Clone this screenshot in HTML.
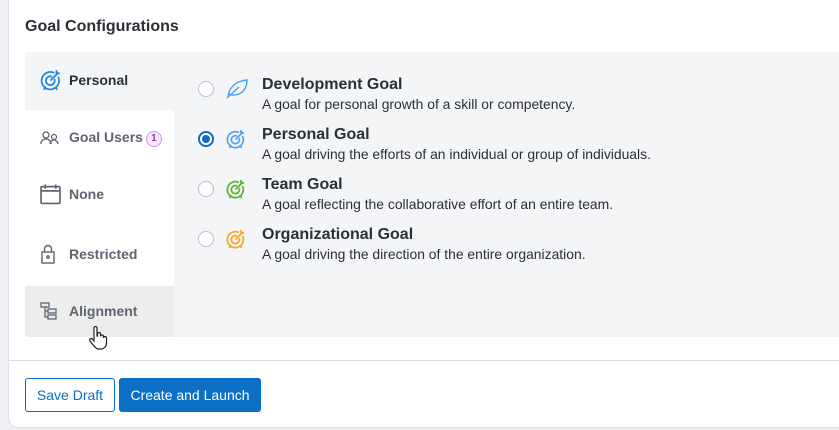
<!DOCTYPE html>
<html><head><style>
*{box-sizing:border-box;margin:0;padding:0}
body{width:839px;height:430px;background:#eef0f4;font-family:"Liberation Sans",Arial,sans-serif;position:relative;overflow:hidden}
.card{position:absolute;left:8px;top:-10px;width:850px;height:438px;background:#fff;border:1px solid #dde1e7;border-radius:10px}
.h{position:absolute;left:25px;top:18px;font-size:16px;font-weight:bold;color:#2b2f36}
.panel{position:absolute;left:25px;top:52px;width:814px;height:285px;background:#f4f5f7}
.nav{position:absolute;left:25px;top:110px;width:149px;height:227px;background:#fff}
.tab{position:absolute;left:25px;width:149px;height:52px;font-size:14px;font-weight:bold;color:#5f6570}
.tab span{position:absolute;left:44px;top:50%;transform:translateY(-50%)}
.tab svg{position:absolute;left:15px;top:50%;transform:translateY(-50%)}
.badge{display:inline-block;width:16px;height:16px;border:1px solid #d58ff0;border-radius:50%;background:#f8eafd;color:#9b2fc7;font-size:10px;text-align:center;line-height:14px;margin-left:3px;vertical-align:1px}
.opt{position:absolute;left:198px}
.radio{position:absolute;left:0;top:5px;width:16px;height:16px;border:1px solid #b9c2cf;border-radius:50%;background:#fff}
.radio.on{border:2px solid #0b6cc4}
.radio.on::after{content:"";position:absolute;left:2px;top:2px;width:8px;height:8px;border-radius:50%;background:#0b6cc4}
.opt svg{position:absolute;left:27px;top:2px}
.t{position:absolute;left:64px;top:0;font-size:16px;font-weight:bold;color:#2b2f36;white-space:nowrap}
.d{position:absolute;left:64px;top:20px;font-size:13.9px;color:#2b2f36;white-space:nowrap}
.hr{position:absolute;left:9px;top:360px;width:830px;height:1px;background:#d9dde3}
.b1{position:absolute;left:25px;top:378px;width:90px;height:34px;border:1px solid #0b6cc4;border-radius:3px;color:#0b6cc4;font-size:14px;text-align:center;line-height:32px;background:#fff}
.b2{position:absolute;left:119px;top:378px;width:142px;height:34px;border-radius:3px;background:#0a6fc5;color:#fff;font-size:14px;text-align:center;line-height:34px}
</style></head><body>
<div class="card"></div>
<div class="h">Goal Configurations</div>
<div class="panel"></div>
<div class="nav"></div>
<div style="position:absolute;left:25px;top:286px;width:149px;height:51px;background:#ededee;border-radius:0 0 0 3px"></div>

<div class="tab" style="top:54px;color:#2b2f36"><svg width="22" height="24" viewBox="0 0 20 22" fill="none" stroke="#1f87e0" stroke-width="1.6"><path d="M13 4.5A8 8 0 1 0 16.5 8"/><path d="M11 8A4 4 0 1 0 13 10"/><path d="M9.5 11.5L17 4M15 2v3h3"/><path d="M5 17l-1.5 3M14 17l1.5 3"/></svg><span>Personal</span></div>
<div class="tab" style="top:112px"><svg width="20" height="16" viewBox="0 0 20 16" fill="none" stroke="#5f6570" stroke-width="1.3"><circle cx="6" cy="5" r="3"/><circle cx="14" cy="7" r="2.5"/><path d="M1 14c0-3 2-5 5-5s5 2 5 5M10 14c0-2 2-4 4-4s4 2 4 4"/></svg><span>Goal Users<i class="badge" style="font-style:normal">1</i></span></div>
<div class="tab" style="top:168px"><svg width="21" height="21" viewBox="0 0 20 20" fill="none" stroke="#5f6570" stroke-width="1.6"><rect x="1" y="3" width="18" height="16" rx="1"/><path d="M1 7h18M5 1v4M15 1v4" /></svg><span>None</span></div>
<div class="tab" style="top:228px"><svg width="16" height="21" viewBox="0 0 16 20" fill="none" stroke="#5f6570" stroke-width="1.4"><rect x="2" y="8" width="12" height="11"/><path d="M4.5 8V5a3.5 3.5 0 0 1 7 0v3"/><circle cx="8" cy="13" r="1.2"/></svg><span>Restricted</span></div>
<div class="tab" style="top:285px"><svg width="20" height="20" viewBox="0 0 20 20" fill="none" stroke="#5f6570" stroke-width="1.3"><rect x="1" y="2" width="8" height="4"/><rect x="8" y="8" width="8" height="4"/><rect x="8" y="14" width="8" height="4"/><path d="M5 6v10h3M5 10h3"/></svg><span>Alignment</span></div>
<svg style="position:absolute;left:88px;top:326px" width="20" height="24" viewBox="0 0 20 24"><path d="M6 2a1.5 1.5 0 0 1 3 0v8h.5V8a1.5 1.5 0 0 1 3 0v2.5a1.5 1.5 0 0 1 3 0V12a1.5 1.5 0 0 1 3 0v5c0 3-2 6-6 6h-2c-2 0-3-1-4.5-3L2 15a1.5 1.5 0 0 1 2.5-2L6 15z" fill="#fff" stroke="#222" stroke-width="1.2"/></svg>

<div class="opt" style="top:76px"><div class="radio"></div><svg width="24" height="22" viewBox="0 0 24 22" fill="none" stroke="#4aa3f0" stroke-width="1.4"><path d="M3 19C4 9 11 3 22 2c0 10-6 15-14 15-2 0-4-1-5-2"/><path d="M2 20L14 9"/></svg><div class="t">Development Goal</div><div class="d">A goal for personal growth of a skill or competency.</div></div>
<div class="opt" style="top:126px"><div class="radio on"></div><svg width="22" height="22" viewBox="0 0 20 22" fill="none" stroke="#4aa3f0" stroke-width="1.6"><path d="M13 4.5A8 8 0 1 0 16.5 8"/><path d="M11 8A4 4 0 1 0 13 10"/><path d="M9.5 11.5L17 4M15 2v3h3"/><path d="M5 17l-1.5 3M14 17l1.5 3"/></svg><div class="t">Personal Goal</div><div class="d">A goal driving the efforts of an individual or group of individuals.</div></div>
<div class="opt" style="top:176px"><div class="radio"></div><svg width="22" height="22" viewBox="0 0 20 22" fill="none" stroke="#5ab52a" stroke-width="1.7"><path d="M13 4.5A8 8 0 1 0 16.5 8"/><path d="M11 8A4 4 0 1 0 13 10"/><path d="M9.5 11.5L17 4M15 2v3h3"/><path d="M5 17l-1.5 3M14 17l1.5 3"/></svg><div class="t">Team Goal</div><div class="d">A goal reflecting the collaborative effort of an entire team.</div></div>
<div class="opt" style="top:226px"><div class="radio"></div><svg width="22" height="22" viewBox="0 0 20 22" fill="none" stroke="#f5a623" stroke-width="1.7"><path d="M13 4.5A8 8 0 1 0 16.5 8"/><path d="M11 8A4 4 0 1 0 13 10"/><path d="M9.5 11.5L17 4M15 2v3h3"/><path d="M5 17l-1.5 3M14 17l1.5 3"/></svg><div class="t">Organizational Goal</div><div class="d">A goal driving the direction of the entire organization.</div></div>

<div class="hr"></div>
<div class="b1">Save Draft</div>
<div class="b2">Create and Launch</div>
</body></html>
